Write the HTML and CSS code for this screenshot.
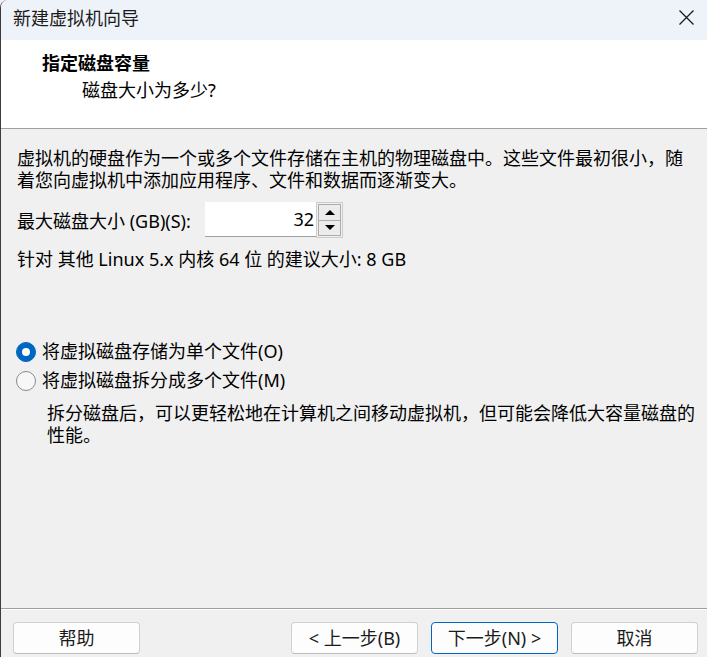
FILE: index.html
```html
<!DOCTYPE html>
<html lang="zh-CN">
<head>
<meta charset="utf-8">
<title>新建虚拟机向导</title>
<link rel="stylesheet" href="styles.css">
</head>
<body>
<div class="window">
  <div class="titlebar">
    <div class="title">新建虚拟机向导</div>
    <svg class="close" width="15" height="15" viewBox="0 0 15 15"><path d="M0.5 0.5 L14.5 14.5 M14.5 0.5 L0.5 14.5" stroke="#1a1a1a" stroke-width="1.3" fill="none"/></svg>
  </div>
  <div class="header">
    <div class="h-title">指定磁盘容量</div>
    <div class="h-sub">磁盘大小为多少?</div>
  </div>
  <div class="content">
    <p class="intro">虚拟机的硬盘作为一个或多个文件存储在主机的物理磁盘中。这些文件最初很小，随<br>着您向虚拟机中添加应用程序、文件和数据而逐渐变大。</p>
    <div class="size-row">
      <span class="size-label">最大磁盘大小 (GB)(S):</span>
      <div class="spin">
        <div class="spin-field">32</div>
        <div class="spin-btns">
          <div class="spin-btn"><span class="arrow-up"></span></div>
          <div class="spin-btn"><span class="arrow-down"></span></div>
        </div>
      </div>
    </div>
    <p class="recommend">针对 其他 Linux 5.x 内核 64 位 的建议大小: 8 GB</p>
    <div class="radio-row first">
      <span class="radio checked"></span>
      <span class="radio-label">将虚拟磁盘存储为单个文件(O)</span>
    </div>
    <div class="radio-row second">
      <span class="radio"></span>
      <span class="radio-label">将虚拟磁盘拆分成多个文件(M)</span>
    </div>
    <p class="desc">拆分磁盘后，可以更轻松地在计算机之间移动虚拟机，但可能会降低大容量磁盘的<br>性能。</p>
  </div>
  <div class="footer">
    <button class="btn">帮助</button>
    <div class="btn-group">
      <button class="btn">&lt; 上一步(B)</button>
      <button class="btn primary">下一步(N) &gt;</button>
      <button class="btn">取消</button>
    </div>
  </div>
</div>
</body>
</html>
```
FILE: styles.css
```css
html, body {
  margin: 0;
  padding: 0;
  width: 707px;
  height: 657px;
  overflow: hidden;
  background: #f0f0f0;
}

body {
  font-family: "Noto Sans", "Noto Sans CJK SC", sans-serif;
  font-size: 18px;
  color: #000;
}

.window {
  height: 657px;
  display: flex;
  flex-direction: column;
  border-left: 1px solid #3c3c3c;
  border-top-left-radius: 8px;
  background: #f0f0f0;
  overflow: hidden;
}

.titlebar {
  height: 40px;
  flex: none;
  background: #eef2f9;
  display: flex;
  align-items: flex-start;
  justify-content: space-between;
  padding: 0 13px 0 12px;
}

.title {
  line-height: 35px;
  font-family: "Noto Sans CJK SC", sans-serif;
  font-size: 18px;
  color: #1b1b1b;
}

.close {
  margin-top: 10px;
  display: block;
}

.header {
  flex: none;
  background: #fff;
  border-bottom: 1px solid #a0a0a0;
  padding: 10px 0 0 41px;
  box-sizing: border-box;
  height: 89px;
}

.h-title {
  font-family: "Noto Sans CJK SC", sans-serif;
  font-weight: bold;
  line-height: 25px;
}

.h-sub {
  margin: 3px 0 0 40px;
  line-height: 24px;
}

.content {
  flex: 1;
  padding: 18px 10px 0 16px;
}

.intro {
  margin: 0;
  line-height: 22px;
  white-space: nowrap;
}

.size-row {
  margin-top: 11px;
  height: 36px;
  display: flex;
  align-items: center;
}

.size-label {
  width: 188px;
  flex: none;
  white-space: nowrap;
}

.spin {
  display: flex;
  height: 36px;
}

.spin-field {
  width: 111px;
  height: 35px;
  box-sizing: border-box;
  background: #fff;
  border-bottom: 1px solid #a0a0a0;
  text-align: right;
  padding-right: 2px;
  line-height: 34px;
}

.spin-btns {
  width: 27px;
  height: 36px;
  box-sizing: border-box;
  border: 1px solid #cccccc;
  padding: 1px;
  display: flex;
  flex-direction: column;
}

.spin-btn {
  flex: 1;
  border: 1px solid #adadad;
  background: #ececec;
  display: flex;
  align-items: center;
  justify-content: center;
}

.spin-btn + .spin-btn {
  border-top: none;
}

.arrow-up {
  width: 0;
  height: 0;
  border-left: 5px solid transparent;
  border-right: 5px solid transparent;
  border-bottom: 5px solid #000;
}

.arrow-down {
  width: 0;
  height: 0;
  border-left: 5px solid transparent;
  border-right: 5px solid transparent;
  border-top: 5px solid #000;
}

.recommend {
  margin: 11px 0 0;
  line-height: 21px;
  white-space: nowrap;
}

.radio-row {
  display: flex;
  align-items: center;
  height: 21px;
  margin-left: -1px;
}

.radio-row.first {
  margin-top: 71px;
}

.radio-row.second {
  margin-top: 8px;
}

.radio {
  width: 20px;
  height: 20px;
  box-sizing: border-box;
  border-radius: 50%;
  border: 1px solid #8a8a8a;
  background: #f7f7f7;
  flex: none;
  display: flex;
  align-items: center;
  justify-content: center;
  margin-right: 6px;
}

.radio.checked {
  border-color: #0067c0;
  background: #0067c0;
}

.radio.checked::after {
  content: "";
  width: 8px;
  height: 8px;
  border-radius: 50%;
  background: #fff;
}

.radio-label {
  line-height: 21px;
  white-space: nowrap;
}

.desc {
  margin: 11px 0 0 30px;
  line-height: 22px;
  white-space: nowrap;
}

.footer {
  flex: none;
  height: 49px;
  box-sizing: border-box;
  border-top: 1px solid #a0a0a0;
  box-shadow: inset 0 1px 0 #ffffff;
  padding: 13px 9px 0 12px;
  display: flex;
  justify-content: space-between;
  align-items: flex-start;
}

.btn-group {
  display: flex;
  gap: 13px;
}

.btn {
  width: 127px;
  height: 32px;
  box-sizing: border-box;
  border: 1px solid #d0d0d0;
  border-bottom-color: #bdbdbd;
  border-radius: 4px;
  background: #fdfdfd;
  font-family: "Noto Sans", "Noto Sans CJK SC", sans-serif;
  font-size: 18px;
  color: #1b1b1b;
  padding: 0;
  line-height: 30px;
  text-align: center;
}

.btn.primary {
  border: 1px solid #0067c0;
}
```
